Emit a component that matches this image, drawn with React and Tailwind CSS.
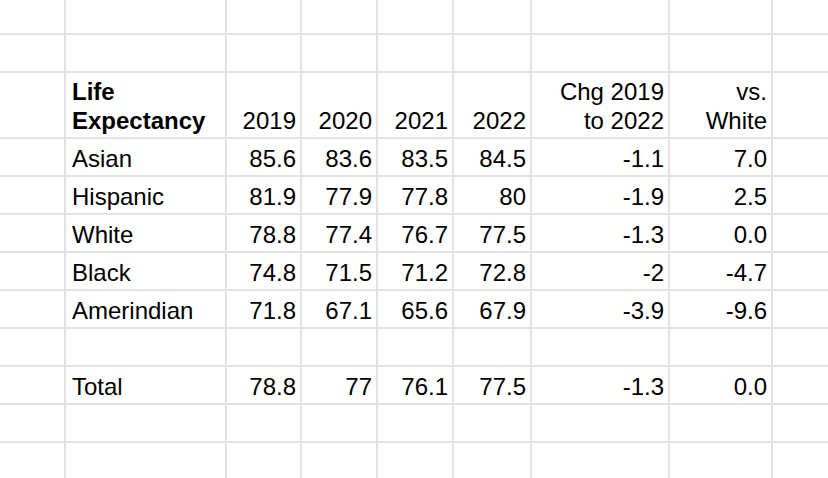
import React from "react";

const ROWS = [
  ["Asian", "85.6", "83.6", "83.5", "84.5", "-1.1", "7.0"],
  ["Hispanic", "81.9", "77.9", "77.8", "80", "-1.9", "2.5"],
  ["White", "78.8", "77.4", "76.7", "77.5", "-1.3", "0.0"],
  ["Black", "74.8", "71.5", "71.2", "72.8", "-2", "-4.7"],
  ["Amerindian", "71.8", "67.1", "65.6", "67.9", "-3.9", "-9.6"],
  null,
  ["Total", "78.8", "77", "76.1", "77.5", "-1.3", "0.0"],
  null,
  null,
];

const Cell = ({ children, right, bold, className = "" }) => (
  <div
    className={`bg-white flex items-end overflow-hidden whitespace-nowrap pb-[2px] ${
      right ? "justify-end text-right pr-[4px]" : "pl-[6px]"
    } ${bold ? "font-bold" : ""} ${className}`}
  >
    {children}
  </div>
);

const EmptyRow = () => (
  <>
    {Array.from({ length: 9 }).map((_, i) => (
      <div key={i} className="bg-white" />
    ))}
  </>
);

export default function App() {
  return (
    <div className="w-[828px] h-[478px] overflow-hidden bg-white">
      <div
        className="grid grid-cols-[64px_159px_73px_74px_74px_76px_136px_101px_1fr] grid-rows-[33px_36px_64px_repeat(9,36px)] gap-[2px] bg-[#e2e2e2] text-black text-[24px] leading-[29px] pb-[8px]"
        style={{ fontFamily: '"Liberation Sans", Arial, sans-serif' }}
      >
        <EmptyRow />
        <EmptyRow />

        <div className="bg-white" />
        <Cell bold>
          <div>
            Life
            <br />
            Expectancy
          </div>
        </Cell>
        <Cell right>2019</Cell>
        <Cell right>2020</Cell>
        <Cell right>2021</Cell>
        <Cell right>2022</Cell>
        <Cell right>
          <div>
            Chg 2019
            <br />
            to 2022
          </div>
        </Cell>
        <Cell right>
          <div>
            vs.
            <br />
            White
          </div>
        </Cell>
        <div className="bg-white" />

        {ROWS.map((row, r) =>
          row ? (
            <React.Fragment key={r}>
              <div className="bg-white" />
              {row.map((v, i) => (
                <Cell key={i} right={i > 0}>
                  {v}
                </Cell>
              ))}
              <div className="bg-white" />
            </React.Fragment>
          ) : (
            <EmptyRow key={r} />
          )
        )}
      </div>
    </div>
  );
}
